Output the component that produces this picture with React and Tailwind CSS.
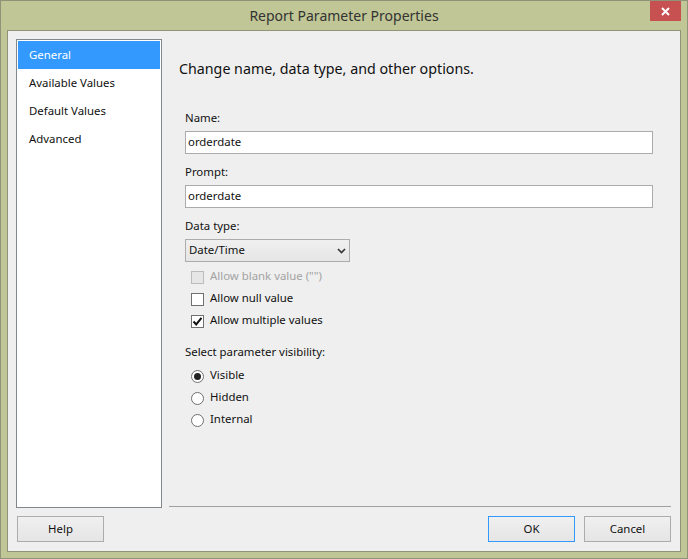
import React from 'react';

const navItems = ['General', 'Available Values', 'Default Values', 'Advanced'];

function CheckRow({ label, checked, disabled }) {
  return (
    <div className="flex items-center h-[22px] pl-[6px] gap-[6px]">
      <div className={`w-[13px] h-[13px] border flex items-center justify-center ${disabled ? 'border-[#bcbcbc] bg-[#e6e6e6]' : 'border-[#707070] bg-white'}`}>
        {checked && (
          <svg width="11" height="11" viewBox="0 0 11 11">
            <path d="M1.5 5.5 L4.2 8.4 L9.5 1.8" fill="none" stroke="#111" strokeWidth="2" />
          </svg>
        )}
      </div>
      <span className={`pb-[2px] ${disabled ? 'text-[#a3a3a3]' : ''}`}>{label}</span>
    </div>
  );
}

function RadioRow({ label, checked }) {
  return (
    <div className="flex items-center h-[22px] pl-[6px] gap-[6px]">
      <div className="w-[13px] h-[13px] rounded-full border border-[#707070] bg-white flex items-center justify-center">
        {checked && <div className="w-[7px] h-[7px] rounded-full bg-[#222]" />}
      </div>
      <span className="pb-[2px]">{label}</span>
    </div>
  );
}

function Field({ label, value }) {
  return (
    <div className="h-[54px]">
      <div className="h-[23px] leading-[20px]">{label}</div>
      <div className="w-[468px] h-[23px] border border-[#ababab] bg-white pl-[2px] leading-[19px]">{value}</div>
    </div>
  );
}

function Btn({ label, primary }) {
  return (
    <div className={`w-[87px] h-[26px] border flex items-center justify-center bg-gradient-to-b from-[#f0f0f0] to-[#e5e5e5] ${primary ? 'border-[#3399ff]' : 'border-[#acacac]'}`}>
      {label}
    </div>
  );
}

export default function App() {
  return (
    <div className="w-[688px] h-[559px] flex flex-col bg-[#c0c695] border border-[#8f9478] text-[11.4px] text-[#111] font-['Noto_Sans',sans-serif] overflow-hidden">
      <div className="h-[29px] shrink-0 grid grid-cols-[1fr_auto_1fr] px-[6px]">
        <div />
        <div className="text-[14px] leading-[30px] text-[#333]">Report Parameter Properties</div>
        <div className="justify-self-end w-[31px] h-[20px] bg-[#c75050] flex items-center justify-center">
          <svg width="9" height="9" viewBox="0 0 9 9">
            <path d="M1 1 L8 8 M8 1 L1 8" stroke="#fff" strokeWidth="2" />
          </svg>
        </div>
      </div>
      <div className="mx-[6px] w-[674px] h-[522px] border border-[#8f9478] bg-[#efefef] flex flex-col">
        <div className="flex h-[477px] pt-[8px] pl-[8px]">
          <div className="w-[146px] h-[469px] border border-[#82878c] bg-white p-px">
            {navItems.map((item, i) => (
              <div key={item} className={`h-[28px] leading-[28px] pl-[11px] ${i === 0 ? 'bg-[#3399ff] text-white' : ''}`}>
                {item}
              </div>
            ))}
          </div>
          <div className="w-[502px] h-[469px] ml-[7px] pl-[9px] flex flex-col">
            <div className="text-[14.25px] leading-[20px] mt-[20px] h-[49px] pl-[1px]">Change name, data type, and other options.</div>
            <div className="pl-[7px]">
              <Field label="Name:" value="orderdate" />
              <Field label="Prompt:" value="orderdate" />
              <div className="h-[23px] leading-[20px]">Data type:</div>
              <div className="w-[165px] h-[23px] border border-[#acacac] bg-gradient-to-b from-[#f0f0f0] to-[#e5e5e5] pl-[3px] pr-[3px] flex items-center justify-between">
                <span className="pb-[2px]">Date/Time</span>
                <svg width="9" height="6" viewBox="0 0 9 6">
                  <path d="M1 1 L4.5 4.5 L8 1" fill="none" stroke="#333" strokeWidth="1.6" />
                </svg>
              </div>
              <div className="mt-[4px]">
                <CheckRow label='Allow blank value ("")' disabled />
                <CheckRow label="Allow null value" />
                <CheckRow label="Allow multiple values" checked />
              </div>
              <div className="mt-[11px] h-[22px] leading-[18px]">Select parameter visibility:</div>
              <RadioRow label="Visible" checked />
              <RadioRow label="Hidden" />
              <RadioRow label="Internal" />
            </div>
            <div className="mt-auto mb-[1px] -ml-[9px] border-t border-[#a0a0a0]" />
          </div>
        </div>
        <div className="flex justify-between mt-[8px] px-[9px]">
          <Btn label="Help" />
          <div className="flex gap-[9px]">
            <Btn label="OK" primary />
            <Btn label="Cancel" />
          </div>
        </div>
      </div>
    </div>
  );
}
